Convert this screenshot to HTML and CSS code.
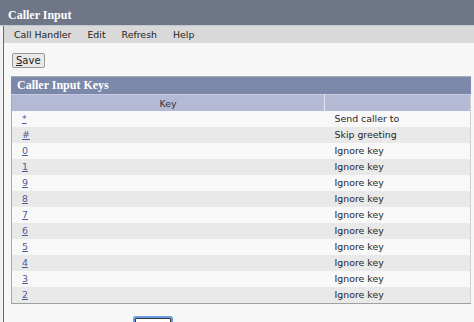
FILE: index.html
```html
<!DOCTYPE html>
<html>
<head>
<meta charset="utf-8">
<link rel="stylesheet" href="styles.css">
</head>
<body>
<div class="title">Caller Input</div>
<div class="frame">
  <nav class="menu">
    <span class="menu-item">Call Handler</span>
    <span class="menu-item">Edit</span>
    <span class="menu-item">Refresh</span>
    <span class="menu-item">Help</span>
  </nav>
  <div class="content">
    <button class="btn save"><u>S</u>ave</button>
    <section class="keys">
      <div class="keys-head">Caller Input Keys</div>
      <table class="keys-table">
        <thead>
          <tr><th class="col-key">Key</th><th class="col-act"></th></tr>
        </thead>
        <tbody>
          <tr><td class="col-key"><a href="#">*</a></td><td class="col-act">Send caller to</td></tr>
          <tr><td class="col-key"><a href="#">#</a></td><td class="col-act">Skip greeting</td></tr>
          <tr><td class="col-key"><a href="#">0</a></td><td class="col-act">Ignore key</td></tr>
          <tr><td class="col-key"><a href="#">1</a></td><td class="col-act">Ignore key</td></tr>
          <tr><td class="col-key"><a href="#">9</a></td><td class="col-act">Ignore key</td></tr>
          <tr><td class="col-key"><a href="#">8</a></td><td class="col-act">Ignore key</td></tr>
          <tr><td class="col-key"><a href="#">7</a></td><td class="col-act">Ignore key</td></tr>
          <tr><td class="col-key"><a href="#">6</a></td><td class="col-act">Ignore key</td></tr>
          <tr><td class="col-key"><a href="#">5</a></td><td class="col-act">Ignore key</td></tr>
          <tr><td class="col-key"><a href="#">4</a></td><td class="col-act">Ignore key</td></tr>
          <tr><td class="col-key"><a href="#">3</a></td><td class="col-act">Ignore key</td></tr>
          <tr><td class="col-key"><a href="#">2</a></td><td class="col-act">Ignore key</td></tr>
        </tbody>
      </table>
    </section>
    <div class="footer">
      <button class="btn focused" aria-label="Save"></button>
    </div>
  </div>
</div>
</body>
</html>
```
FILE: styles.css
```css
html, body {
  margin: 0;
  padding: 0;
  overflow: hidden;
  height: 322px;
}
body {
  background: #f2f2f2;
  font-family: "DejaVu Sans", Verdana, sans-serif;
  font-size: 9.4px;
  color: #262626;
}
.title {
  height: 26px;
  box-sizing: border-box;
  padding: 8px 0 0 8px;
  background: #6e7687;
  border-bottom: 1px solid #c3c8d0;
  color: #ffffff;
  font-family: "Liberation Serif", "Times New Roman", serif;
  font-weight: bold;
  font-size: 12px;
  line-height: 14px;
}
.frame {
  margin-left: 3px;
  border-left: 1px solid #666a70;
  background: #f7f7f7;
  height: 300px;
}
.menu {
  display: flex;
  height: 17px;
  align-items: center;
  padding-left: 2px;
  background: #d9d9d9;
  color: #222;
}
.menu-item {
  padding: 0 8px;
}
.content {
  padding: 10px 3px 0 7px;
}
.btn {
  font-family: "DejaVu Sans", Verdana, sans-serif;
  font-size: 10px;
  color: #222;
  background: #e9e9e9;
  border: 1px solid #9a9a9a;
  border-radius: 2px;
  padding: 0 3px;
  height: 15px;
  line-height: 12px;
}
.save {
  display: block;
  margin-left: 1px;
}
.keys {
  margin-top: 8px;
}
.keys-head {
  height: 17px;
  box-sizing: content-box;
  border-top: 1px solid #a3abbd;
  background: #7b88a9;
  color: #ffffff;
  font-family: "Liberation Serif", "Times New Roman", serif;
  font-weight: bold;
  font-size: 12px;
  line-height: 17px;
  padding-left: 6px;
}
.keys-table {
  width: 100%;
  border-collapse: collapse;
  border-left: 1px solid #a8a8a8;
  border-right: 1px solid #d0d0d0;
  border-bottom: 1px solid #a0a0a0;
}
.keys-table th {
  height: 16px;
  padding: 0;
  background: #b4b9d5;
  font-weight: normal;
  color: #333;
  border-top: 1px solid #c6cbe0;
}
.keys-table th.col-key {
  width: 312px;
  border-right: 1px solid #e4e6f0;
}
.keys-table td {
  height: 16px;
  padding: 0;
  line-height: 16px;
}
.keys-table td.col-key {
  padding-left: 10px;
}
.keys-table td.col-act {
  padding-left: 10px;
}
.keys-table tbody tr:nth-child(odd) {
  background: #f8f8f8;
}
.keys-table tbody tr:nth-child(even) {
  background: #e9e9e9;
}
.keys-table a {
  color: #4d5c94;
}
.footer {
  padding: 12px 0 0 122px;
}
.focused {
  width: 40px;
  height: 20px;
  background: #ffffff;
  border: 2px solid #6b9be0;
  border-radius: 3px;
  box-shadow: inset 0 0 0 1px #333;
}
```
